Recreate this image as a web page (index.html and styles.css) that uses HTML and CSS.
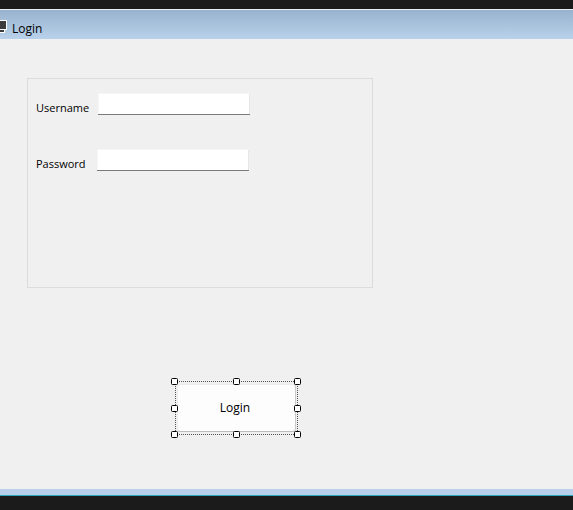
FILE: index.html
```html
<!DOCTYPE html>
<html lang="en">
<head>
<meta charset="utf-8">
<title>Login</title>
<link rel="stylesheet" href="styles.css">
</head>
<body>
<div class="top-edge"></div>
<header class="titlebar">
  <svg class="form-icon" width="7" height="14" viewBox="0 0 7 14" aria-hidden="true">
    <rect x="-4" y="0.5" width="10.5" height="9" fill="#3c3c3c" stroke="#fff"/>
    <rect x="-4" y="9.5" width="8.5" height="3" fill="#3c3c3c" stroke="#fff"/>
  </svg>
  <span class="title-text">Login</span>
</header>
<main class="form-body">
  <section class="panel">
    <div class="field field-user">
      <label class="field-label">Username</label>
      <div class="textbox"></div>
    </div>
    <div class="field field-pass">
      <label class="field-label">Password</label>
      <div class="textbox"></div>
    </div>
  </section>
  <div class="selection">
    <button class="login-btn" type="button">Login</button>
    <span class="handle h-tl"></span>
    <span class="handle h-tc"></span>
    <span class="handle h-tr"></span>
    <span class="handle h-ml"></span>
    <span class="handle h-mr"></span>
    <span class="handle h-bl"></span>
    <span class="handle h-bc"></span>
    <span class="handle h-br"></span>
  </div>
</main>
<div class="form-bottom"></div>
<div class="bottom-edge"></div>
</body>
</html>
```
FILE: styles.css
```css
* { box-sizing: border-box; }
html, body { margin: 0; padding: 0; height: 510px; overflow: hidden; }
body {
  width: 573px;
  background: #1b1b1b;
  font-family: "Open Sans", "Noto Sans", sans-serif;
  font-size: 12px;
  color: #000;
  display: flex;
  flex-direction: column;
}
.top-edge { height: 9px; background: #1b1b1b; flex: none; }
.titlebar {
  height: 30px;
  flex: none;
  border-top: 1px solid #e8eef5;
  background: linear-gradient(#98b3cf, #b9d1ea);
  display: flex;
  align-items: center;
  gap: 5px;
  padding-top: 7px;
}
.form-icon { flex: none; margin-top: -3px; }
.title-text { font-size: 12px; line-height: 16px; margin-top: 2px; }
.form-body {
  height: 450px;
  flex: none;
  background: #f0f0f0;
  padding: 39px 0 0 27px;
}
.panel {
  width: 346px;
  height: 210px;
  border: 1px solid #dcdcdc;
  display: flex;
  flex-direction: column;
}
.field { display: flex; align-items: center; height: 22px; padding-left: 8px; }
.field-user { margin-top: 14px; }
.field-pass { margin-top: 34px; }
.field-label { flex: none; font-size: 11px; line-height: 16px; margin-top: 7px; white-space: nowrap; }
.field-user .field-label { width: 62px; }
.field-pass .field-label { width: 61px; }
.textbox {
  flex: none;
  width: 152px;
  height: 22px;
  background: #fff;
  border-bottom: 1px solid #7a7a7a;
  box-shadow: inset 1px 1px #f6f6f6, inset -1px 0 #e6e6e6;
}
.selection {
  position: relative;
  width: 123px;
  height: 54px;
  margin: 93px 0 0 148px;
  border: 1px dotted #555;
  padding: 2px 1px;
}
.login-btn {
  display: block;
  width: 100%;
  height: 100%;
  background: #fdfdfd;
  border: 1px solid #ececec;
  border-bottom: 1px solid #bdbdbd;
  border-right: 1px solid #c9c9c9;
  border-radius: 3px;
  font: inherit;
  color: #000;
  padding: 0 3px 1px 0;
}
.handle {
  position: absolute;
  width: 7px;
  height: 7px;
  background: #fff;
  border: 1px solid #000;
  border-radius: 1.5px;
}
.h-tl, .h-tc, .h-tr { top: -4px; }
.h-ml, .h-mr { top: 23px; }
.h-bl, .h-bc, .h-br { top: 49px; }
.h-tl, .h-ml, .h-bl { left: -5px; }
.h-tc, .h-bc { left: 57px; }
.h-tr, .h-mr, .h-br { left: 118px; }
.form-bottom { height: 6px; flex: none; background: #b7cfeb; }
.bottom-edge { flex: 1; background: #1b1b1b; border-top: 1px solid #2aa9b8; }
```
